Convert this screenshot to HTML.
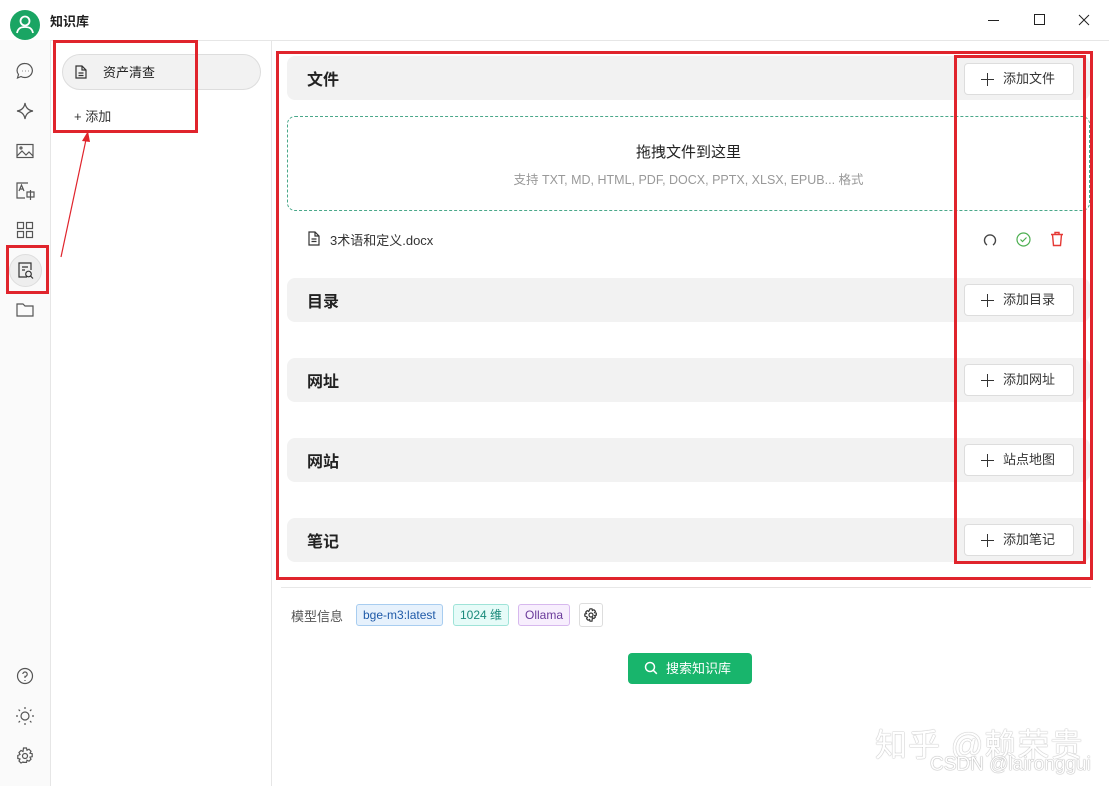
<!DOCTYPE html>
<html><head><meta charset="utf-8"><style>
*{margin:0;padding:0;box-sizing:border-box}
body{width:1109px;height:786px;background:#fff;font-family:"Liberation Sans","Noto Sans CJK SC",sans-serif;color:#222;position:relative;overflow:hidden}
.a{position:absolute}
svg.i{position:absolute;fill:none;stroke:#555;stroke-width:1.2}
.hdr{position:absolute;left:287px;width:803px;height:44px;background:#f2f2f2;border-radius:8px}
.hdr b{position:absolute;left:20px;top:10px;font-size:16px;font-weight:bold;color:#222}
.btn{position:absolute;left:964px;width:110px;height:32px;background:#fff;border:1px solid #ddd;border-radius:4px;font-size:13px;color:#333;line-height:30px;padding-left:38px}
.btn:before{content:"";position:absolute;left:16px;top:15px;width:13px;height:1.2px;background:#333}
.btn:after{content:"";position:absolute;left:22px;top:9px;width:1.2px;height:13px;background:#333}
.red{position:absolute;border:3px solid #e0242c}
.tag{position:absolute;top:604px;height:22px;border-radius:3px;font-size:12px;line-height:20px;padding:0 6px}
</style></head><body>
<div class="a" style="left:10px;top:10px;width:30px;height:30px;border-radius:50%;background:#1aa563"></div>
<svg class="i" style="left:10px;top:10px;stroke:#fff;stroke-width:1.8" width="30" height="30"><circle cx="15" cy="11" r="4.5"/><path d="M7 23c1-5 4-6 8-6s7 1 8 6"/></svg>
<div class="a" style="left:50px;top:11px;font-size:13px;font-weight:bold">知识库</div>
<div class="a" style="left:988px;top:20px;width:11px;height:1px;background:#222"></div>
<div class="a" style="left:1034px;top:14px;width:11px;height:11px;border:1px solid #222"></div>
<svg class="i" style="left:1078px;top:14px;stroke:#222;stroke-width:1" width="12" height="12"><path d="M1 1L11 11M11 1L1 11"/></svg>
<div class="a" style="left:50px;top:40px;width:1059px;height:1px;background:#e6e6e6"></div>
<div class="a" style="left:0;top:40px;width:50px;height:746px;background:#fafafa"></div>
<div class="a" style="left:50px;top:40px;width:1px;height:746px;background:#e6e6e6"></div>
<div class="a" style="left:271px;top:40px;width:1px;height:746px;background:#e6e6e6"></div>
<svg class="i" style="left:16px;top:62px" width="18" height="18"><path d="M9 1.5a7.5 7 0 1 1-4 13l-3.5 1.5 1-3.5A7.5 7 0 0 1 9 1.5z"/><path d="M6 9h.5M9 9h.5M12 9h.5"/></svg>
<svg class="i" style="left:16px;top:102px" width="18" height="18"><path d="M9 1Q10 8 17 9Q10 10 9 17Q8 10 1 9Q8 8 9 1z"/></svg>
<svg class="i" style="left:16px;top:143px" width="18" height="17"><rect x="1" y="1.5" width="16" height="13"/><path d="M1 13l5-5 4 4 3-3 4 4"/><circle cx="5" cy="5" r="1"/></svg>
<svg class="i" style="left:16px;top:182px" width="19" height="19"><path d="M12 1H1v15h8"/><path d="M3 9l2.5-6 2.5 6M4 7h3"/><path d="M11 10h7v5h-7zM14.5 8v10"/></svg>
<svg class="i" style="left:16px;top:221px" width="18" height="18"><rect x="1.5" y="1.5" width="6" height="6"/><rect x="10.5" y="1.5" width="6" height="6"/><rect x="1.5" y="10.5" width="6" height="6"/><rect x="10.5" y="10.5" width="6" height="6"/></svg>
<div class="a" style="left:9px;top:254px;width:33px;height:33px;border-radius:50%;background:#eee;border:1px solid #ddd"></div>
<svg class="i" style="left:17px;top:262px;stroke:#333" width="18" height="18"><path d="M10 15H2V1h12v7"/><path d="M5 5h6M5 8h3"/><circle cx="11.5" cy="12" r="2.8"/><path d="M13.5 14l2.5 2.5"/></svg>
<svg class="i" style="left:16px;top:302px" width="18" height="16"><path d="M1 2h6l2 2h8v10H1z"/></svg>
<svg class="i" style="left:16px;top:667px" width="18" height="18"><circle cx="9" cy="9" r="7.5"/><path d="M6.8 7a2.2 2.2 0 1 1 2.2 2.4V11M9 13v1"/></svg>
<svg class="i" style="left:15px;top:706px" width="20" height="20"><circle cx="10" cy="10" r="4"/><path d="M10 1v2M10 17v2M1 10h2M17 10h2M3.6 3.6l1.4 1.4M15 15l1.4 1.4M3.6 16.4L5 15M15 5l1.4-1.4"/></svg>
<svg class="i" style="left:16px;top:747px" width="18" height="18"><circle cx="9" cy="9" r="2.5"/><path d="M7.5 1h3l.5 2.2 2-1 2 2-1 2 2.2.5v3l-2.2.5 1 2-2 2-2-1-.5 2.2h-3L7 15l-2 1-2-2 1-2-2.2-.5v-3L4 7.5l-1-2 2-2 2 1z"/></svg>
<div class="a" style="left:62px;top:54px;width:199px;height:36px;border-radius:18px;background:#f2f2f2;border:1px solid #ddd"></div>
<svg class="i" style="left:75px;top:65px;stroke:#333" width="12" height="14"><path d="M1 1h6l4 4v8H1zM7 1v4h4M3.5 8h5M3.5 10.5h5"/></svg>
<div class="a" style="left:103px;top:62px;font-size:13px">资产清查</div>
<div class="a" style="left:74px;top:106px;font-size:13px;color:#333">+ 添加</div>
<div class="hdr" style="top:56px"><b>文件</b></div>
<div class="btn" style="top:63px">添加文件</div>
<div class="a" style="left:287px;top:116px;width:803px;height:95px;border:1px dashed #4aa88a;border-radius:8px"></div>
<div class="a" style="left:287px;top:141px;width:803px;text-align:center;font-size:15px;color:#222">拖拽文件到这里</div>
<div class="a" style="left:287px;top:169px;width:803px;text-align:center;font-size:12.5px;color:#999">支持 TXT, MD, HTML, PDF, DOCX, PPTX, XLSX, EPUB... 格式</div>
<svg class="i" style="left:308px;top:231px;stroke:#333" width="12" height="15"><path d="M1 1h6l4 4v9H1zM7 1v4h4M3.5 8h5M3.5 10.5h5"/></svg>
<div class="a" style="left:330px;top:230px;font-size:13px;color:#333">3术语和定义.docx</div>
<svg class="i" style="left:983px;top:233px;stroke:#444;stroke-width:1.4" width="14" height="14"><path d="M4 12A5.5 5.5 0 1 1 10 12"/></svg>
<svg class="i" style="left:1016px;top:232px;stroke:#4caf50" width="15" height="15"><circle cx="7.5" cy="7.5" r="6.5"/><path d="M4.5 7.5l2 2 4-4"/></svg>
<svg class="i" style="left:1050px;top:231px;stroke:#e53935;stroke-width:1.4" width="14" height="16"><path d="M1 3.5h12M5 3.5V1.5h4v2M2.5 3.5l1 11h7l1-11"/></svg>
<div class="hdr" style="top:278px"><b>目录</b></div><div class="btn" style="top:284px">添加目录</div>
<div class="hdr" style="top:358px"><b>网址</b></div><div class="btn" style="top:364px">添加网址</div>
<div class="hdr" style="top:438px"><b>网站</b></div><div class="btn" style="top:444px">站点地图</div>
<div class="hdr" style="top:518px"><b>笔记</b></div><div class="btn" style="top:524px">添加笔记</div>
<div class="a" style="left:281px;top:587px;width:810px;height:1px;background:#e8e8e8"></div>
<div class="a" style="left:291px;top:606px;font-size:13px;color:#555">模型信息</div>
<div class="tag" style="left:356px;background:#e6f1fc;border:1px solid #a8cdf0;color:#1f5aa8">bge-m3:latest</div>
<div class="tag" style="left:453px;background:#e6fbf8;border:1px solid #9fe3d8;color:#1a8a7a">1024 维</div>
<div class="tag" style="left:518px;background:#f7eefd;border:1px solid #d7b8ee;color:#6a3a9a">Ollama</div>
<div class="a" style="left:579px;top:603px;width:24px;height:24px;border:1px solid #ddd;border-radius:3px"></div>
<svg class="i" style="left:584px;top:608px;stroke:#333" width="14" height="14"><circle cx="7" cy="7" r="2"/><path d="M6 .8h2l.4 1.7 1.5-.8 1.5 1.5-.8 1.5 1.7.4v2l-1.7.4.8 1.5-1.5 1.5-1.5-.8L8 13.2H6l-.4-1.7-1.5.8-1.5-1.5.8-1.5L.8 8V6l1.7-.4-.8-1.5 1.5-1.5 1.5.8z"/></svg>
<div class="a" style="left:628px;top:653px;width:124px;height:31px;background:#18b56c;border-radius:4px;color:#fff;font-size:13px;line-height:31px;padding-left:38px">搜索知识库</div>
<svg class="i" style="left:644px;top:661px;stroke:#fff;stroke-width:1.5" width="14" height="14"><circle cx="6" cy="6" r="4.5"/><path d="M9.3 9.3l3.5 3.5"/></svg>
<div class="a" style="left:875px;top:720px;font-size:32px;color:#fff;text-shadow:0 0 1px #aaa,0 0 1px #aaa;letter-spacing:1px">知乎 @赖荣贵</div>
<div class="a" style="left:930px;top:754px;font-size:19px;color:#fff;text-shadow:0 0 1px #999,0 0 1px #999">CSDN @laironggui</div>
<div class="red" style="left:53px;top:40px;width:145px;height:93px"></div>
<div class="red" style="left:6px;top:245px;width:43px;height:49px"></div>
<div class="red" style="left:276px;top:51px;width:817px;height:529px"></div>
<div class="red" style="left:954px;top:55px;width:132px;height:509px"></div>
<svg class="a" style="left:55px;top:128px" width="40" height="135"><path d="M6 129L32 7" stroke="#e0242c" stroke-width="1.2" fill="none"/><path d="M33 3l-6 10 8 1z" fill="#e0242c"/></svg>
</body></html>
